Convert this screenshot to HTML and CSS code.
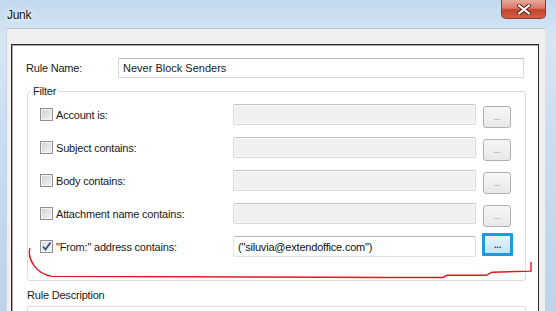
FILE: index.html
```html
<!DOCTYPE html>
<html lang="en">
<head>
    <meta charset="UTF-8">
    <meta name="viewport" content="width=device-width, initial-scale=1.0">
    <title>Junk</title>
    <link rel="stylesheet" href="styles.css">
</head>
<body>
    <div class="window">
        <div class="titlebar">
            <span class="title">Junk</span>
            <div class="close">
                <svg width="14" height="11" viewBox="0 0 14 11">
                    <path d="M2 1.5 L12 9.5 M12 1.5 L2 9.5" stroke="#5a2118" stroke-width="4" stroke-linecap="round"/>
                    <path d="M2 1.5 L12 9.5 M12 1.5 L2 9.5" stroke="#ffffff" stroke-width="2.2" stroke-linecap="round"/>
                </svg>
            </div>
        </div>
        <div class="client">
            <div class="panel">
                <div class="name-row">
                    <label for="ruleName">Rule Name:</label>
                    <input type="text" id="ruleName" class="name-input" value="Never Block Senders">
                </div>

                <fieldset class="filter">
                    <legend>Filter</legend>
                    <div class="rows">
                        <label class="check"><span class="box"></span>Account is:</label>
                        <span class="field"></span>
                        <span class="more">...</span>

                        <label class="check"><span class="box"></span>Subject contains:</label>
                        <span class="field"></span>
                        <span class="more">...</span>

                        <label class="check"><span class="box"></span>Body contains:</label>
                        <span class="field"></span>
                        <span class="more">...</span>

                        <label class="check"><span class="box"></span>Attachment name contains:</label>
                        <span class="field"></span>
                        <span class="more">...</span>

                        <label class="check">
                            <span class="box checked">
                                <svg width="11" height="11" viewBox="0 0 11 11">
                                    <path d="M2 5.5 L4.5 8.5 L9.5 1.5" fill="none" stroke="#3b4f8c" stroke-width="1.8"/>
                                </svg>
                            </span>"From:" address contains:
                        </label>
                        <span class="field active">("siluvia@extendoffice.com")</span>
                        <span class="more focused">...</span>
                    </div>
                </fieldset>

                <div class="desc-label">Rule Description</div>
                <div class="desc-box"></div>

                <!-- hand-drawn red mark over the dialog -->
                <svg class="mark" viewBox="12 45 526 261" preserveAspectRatio="none">
                    <path d="M30 240 C27 250 36 265 52 267 L390 268 L443 268 L447 266 L486 266 L492 263 L531 262 L531 253" fill="none" stroke="#e8141b" stroke-width="1.4"/>
                </svg>
            </div>
        </div>
        <div class="bottom-edge"></div>
    </div>
</body>
</html>
```

FILE: styles.css
```css
body {
    margin: 0;
    padding: 0;
    font-family: "Liberation Sans", Arial, sans-serif;
    font-size: 11px;
    letter-spacing: -0.2px;
    color: #1a1a1a;
}

.window {
    width: 556px;
    height: 311px;
    overflow: hidden;
    display: flex;
    flex-direction: column;
    background: linear-gradient(180deg, #c3d9ee 0%, #d6e6f5 12%, #c9ddf1 45%, #bcd3ea 100%);
}

.titlebar {
    height: 28px;
    display: flex;
    align-items: flex-start;
    flex-shrink: 0;
}

.title {
    padding: 8px 0 0 7px;
    font-size: 12px;
    letter-spacing: -0.3px;
    color: #111;
    text-shadow: 0 0 6px #ffffff, 0 0 3px #ffffff;
}

.close {
    margin-left: auto;
    margin-right: 10px;
    width: 43px;
    height: 18px;
    display: flex;
    align-items: center;
    justify-content: center;
    border: 1px solid #8a3a2e;
    border-top: none;
    border-radius: 0 0 5px 5px;
    background: linear-gradient(180deg, #e9a99b 0%, #d9786a 45%, #c4422c 55%, #d0604a 100%);
}

.client {
    flex: 1;
    display: flex;
    min-width: 0;
    margin: 0 11px 0 6px;
    padding: 15px 6px 0 4px;
    background: #f0f0f0;
    border-top: 1px solid #b9c6d3;
    border-left: 1px solid #c9d3dd;
}

.panel {
    flex: 1;
    min-width: 0;
    position: relative;
    padding: 0 14px;
    background: #ffffff;
    border: 1px solid #2b2b2b;
    border-bottom: none;
    box-shadow: inset 1px 1px 0 #a8a8a8;
}

.name-row {
    display: flex;
    align-items: center;
    margin-top: 13px;
    height: 20px;
}

.name-row label {
    width: 92px;
    flex-shrink: 0;
}

.name-input {
    flex: 1;
    min-width: 0;
    height: 20px;
    box-sizing: border-box;
    margin: 0;
    padding: 0 4px;
    font: inherit;
    color: #1a1a1a;
    border: 1px solid #d5dbe1;
    border-top-color: #b7bcc2;
    outline: none;
}

.filter {
    min-width: 0;
    margin: 6px -2px 0 1px;
    padding: 0 14px 23px 12px;
    border: 1px solid #d5dfe5;
    border-radius: 3px;
}

.filter legend {
    margin-left: -9px;
    padding: 0 2px;
    line-height: 14px;
}

.rows {
    margin-top: 6px;
    display: grid;
    grid-template-columns: 186px 243px 28px;
    grid-auto-rows: 21px;
    column-gap: 7px;
    row-gap: 12px;
}

.check {
    display: flex;
    align-items: center;
    gap: 3px;
    white-space: nowrap;
}

.box {
    width: 13px;
    height: 13px;
    box-sizing: border-box;
    flex-shrink: 0;
    display: flex;
    align-items: center;
    justify-content: center;
    border: 1px solid #8f8f8f;
    background: linear-gradient(135deg, #d0d0d0 0%, #e6e6e6 60%, #f6f6f6 100%);
    box-shadow: inset 0 0 0 1px #f4f4f4;
}

.box.checked {
    background: linear-gradient(135deg, #dcdcdc 0%, #f0f0f0 60%, #fafafa 100%);
}

.field {
    box-sizing: border-box;
    display: flex;
    align-items: center;
    padding: 0 4px;
    border: 1px solid #d9d9d9;
    border-top-color: #c4c4c4;
    border-radius: 2px;
    background: #f0f0f0;
    box-shadow: inset 0 0 0 1px #f7f7f7;
}

.field.active {
    background: #ffffff;
    border-color: #dde3e9;
    border-top-color: #b5bac0;
    box-shadow: none;
    color: #111;
}

.more {
    box-sizing: border-box;
    height: 22px;
    margin-top: 2px;
    display: flex;
    align-items: center;
    justify-content: center;
    font-size: 9px;
    color: #8a8a8a;
    border: 1px solid #b0b0b0;
    border-radius: 3px;
    background: linear-gradient(180deg, #f6f6f6 0%, #f0f0f0 50%, #e8e8e8 100%);
}

.more.focused {
    height: 23px;
    width: 31px;
    margin: -3px 0 0 -1px;
    border: 3px solid #1c9ae2;
    border-radius: 1px;
    color: #1e2e4e;
    font-weight: bold;
    background: linear-gradient(180deg, #e6f3fc 0%, #d6ecfb 50%, #c3e2f8 100%);
}

.desc-label {
    margin: 7px 0 0 1px;
    line-height: 14px;
}

.desc-box {
    margin: 4px -2px 0 1px;
    height: 10px;
    border: 1px solid #d5dfe5;
    border-bottom: none;
}

.mark {
    position: absolute;
    left: 0;
    top: 0;
    width: 100%;
    height: 100%;
    pointer-events: none;
}

.bottom-edge {
    height: 4px;
    flex-shrink: 0;
    background: #9c9c9c;
}
```
